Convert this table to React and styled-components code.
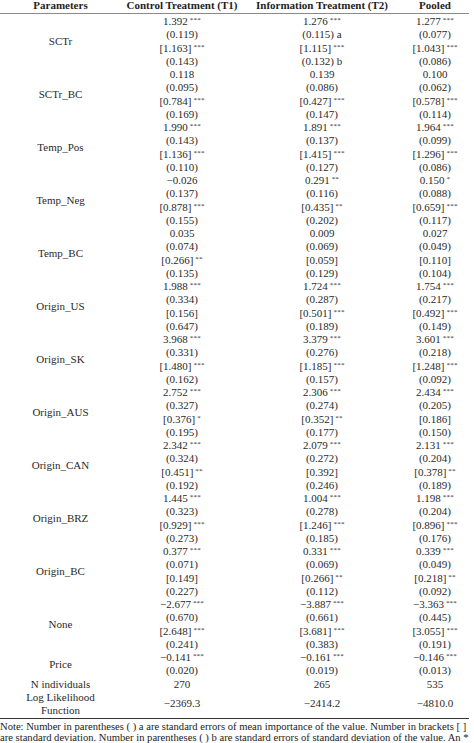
import React from 'react';
import styled, { createGlobalStyle } from 'styled-components';

const GlobalStyle = createGlobalStyle`
  html, body {
    margin: 0;
    padding: 0;
    background: #ffffff;
    overflow: hidden;
  }
  body {
    font-family: "Liberation Serif", "Times New Roman", serif;
    color: #2a2a2a;
  }
`;

const Page = styled.div`
  width: 474px;
  height: 743px;
  overflow: hidden;
`;

const Table = styled.div`
  width: 469px;
`;

const Row = styled.div`
  display: grid;
  grid-template-columns: 121px 122px 158px 68px;
  align-items: center;
  text-align: center;
`;

const HeaderRow = styled(Row)`
  padding-bottom: 2px;
  border-bottom: 1px solid #8a8a8a;
  margin-bottom: 1px;
`;

const HeadCell = styled.div`
  font-weight: bold;
  font-size: 11px;
  line-height: 11px;
  white-space: nowrap;
  color: #1e1e1e;
`;

const Body = styled.div`
  border-bottom: 1px solid #333333;
  padding-bottom: 1px;
`;

const Label = styled.div`
  font-size: 11px;
  line-height: 13.25px;
`;

const Cell = styled.div`
  display: flex;
  flex-direction: column;
  align-items: center;
`;

const Line = styled.div`
  font-size: 11px;
  line-height: 13.25px;
  height: 13.25px;
  white-space: nowrap;
`;

const Stars = styled.span`
  font-size: 7px;
  line-height: 0;
  vertical-align: 3px;
  margin-left: 2px;
  letter-spacing: 0.2px;
`;

const Note = styled.div`
  padding-top: 3px;
  font-size: 10.6px;
  line-height: 10.4px;
  color: #222222;
`;

const NoteLine = styled.div`
  white-space: nowrap;
`;

const M = '\u2212';

const rows = [
  ['SCTr',
    ['1.392 ***', '(0.119)', '[1.163] ***', '(0.143)'],
    ['1.276 ***', '(0.115) a', '[1.115] ***', '(0.132) b'],
    ['1.277 ***', '(0.077)', '[1.043] ***', '(0.086)']],
  ['SCTr_BC',
    ['0.118', '(0.095)', '[0.784] ***', '(0.169)'],
    ['0.139', '(0.086)', '[0.427] ***', '(0.147)'],
    ['0.100', '(0.062)', '[0.578] ***', '(0.114)']],
  ['Temp_Pos',
    ['1.990 ***', '(0.143)', '[1.136] ***', '(0.110)'],
    ['1.891 ***', '(0.137)', '[1.415] ***', '(0.127)'],
    ['1.964 ***', '(0.099)', '[1.296] ***', '(0.086)']],
  ['Temp_Neg',
    [M + '0.026', '(0.137)', '[0.878] ***', '(0.155)'],
    ['0.291 **', '(0.116)', '[0.435] **', '(0.202)'],
    ['0.150 *', '(0.088)', '[0.659] ***', '(0.117)']],
  ['Temp_BC',
    ['0.035', '(0.074)', '[0.266] **', '(0.135)'],
    ['0.009', '(0.069)', '[0.059]', '(0.129)'],
    ['0.027', '(0.049)', '[0.110]', '(0.104)']],
  ['Origin_US',
    ['1.988 ***', '(0.334)', '[0.156]', '(0.647)'],
    ['1.724 ***', '(0.287)', '[0.501] ***', '(0.189)'],
    ['1.754 ***', '(0.217)', '[0.492] ***', '(0.149)']],
  ['Origin_SK',
    ['3.968 ***', '(0.331)', '[1.480] ***', '(0.162)'],
    ['3.379 ***', '(0.276)', '[1.185] ***', '(0.157)'],
    ['3.601 ***', '(0.218)', '[1.248] ***', '(0.092)']],
  ['Origin_AUS',
    ['2.752 ***', '(0.327)', '[0.376] *', '(0.195)'],
    ['2.306 ***', '(0.274)', '[0.352] **', '(0.177)'],
    ['2.434 ***', '(0.205)', '[0.186]', '(0.150)']],
  ['Origin_CAN',
    ['2.342 ***', '(0.324)', '[0.451] **', '(0.192)'],
    ['2.079 ***', '(0.272)', '[0.392]', '(0.246)'],
    ['2.131 ***', '(0.204)', '[0.378] **', '(0.189)']],
  ['Origin_BRZ',
    ['1.445 ***', '(0.323)', '[0.929] ***', '(0.273)'],
    ['1.004 ***', '(0.278)', '[1.246] ***', '(0.185)'],
    ['1.198 ***', '(0.204)', '[0.896] ***', '(0.176)']],
  ['Origin_BC',
    ['0.377 ***', '(0.071)', '[0.149]', '(0.227)'],
    ['0.331 ***', '(0.069)', '[0.266] **', '(0.112)'],
    ['0.339 ***', '(0.049)', '[0.218] **', '(0.092)']],
  ['None',
    [M + '2.677 ***', '(0.670)', '[2.648] ***', '(0.241)'],
    [M + '3.887 ***', '(0.661)', '[3.681] ***', '(0.383)'],
    [M + '3.363 ***', '(0.445)', '[3.055] ***', '(0.191)']],
  ['Price',
    [M + '0.141 ***', '(0.020)'],
    [M + '0.161 ***', '(0.019)'],
    [M + '0.146 ***', '(0.013)']],
  ['N individuals', ['270'], ['265'], ['535']],
  [['Log Likelihood', 'Function'], [M + '2369.3'], [M + '2414.2'], [M + '4810.0']],
];

const Value = ({ text }) => {
  const m = text.match(/^(.*?)\s(\*+)$/);
  if (!m) return <Line>{text}</Line>;
  return (
    <Line>
      {m[1]}
      <Stars>{m[2]}</Stars>
    </Line>
  );
};

const App = () => (
  <Page>
    <GlobalStyle />
    <Table>
      <HeaderRow>
        <HeadCell>Parameters</HeadCell>
        <HeadCell>Control Treatment (T1)</HeadCell>
        <HeadCell>Information Treatment (T2)</HeadCell>
        <HeadCell>Pooled</HeadCell>
      </HeaderRow>
      <Body>
        {rows.map(([label, ...cols], i) => (
          <Row key={i}>
            <Cell>
              {(Array.isArray(label) ? label : [label]).map((l) => (
                <Label key={l}>{l}</Label>
              ))}
            </Cell>
            {cols.map((lines, j) => (
              <Cell key={j}>
                {lines.map((t, k) => (
                  <Value key={k} text={t} />
                ))}
              </Cell>
            ))}
          </Row>
        ))}
      </Body>
    </Table>
    <Note>
      <NoteLine>
        Note: Number in parentheses ( ) a are standard errors of mean importance of the value. Number in brackets [ ]
      </NoteLine>
      <NoteLine>
        are standard deviation. Number in parentheses ( ) b are standard errors of standard deviation of the value. An *
      </NoteLine>
    </Note>
  </Page>
);

export default App;
